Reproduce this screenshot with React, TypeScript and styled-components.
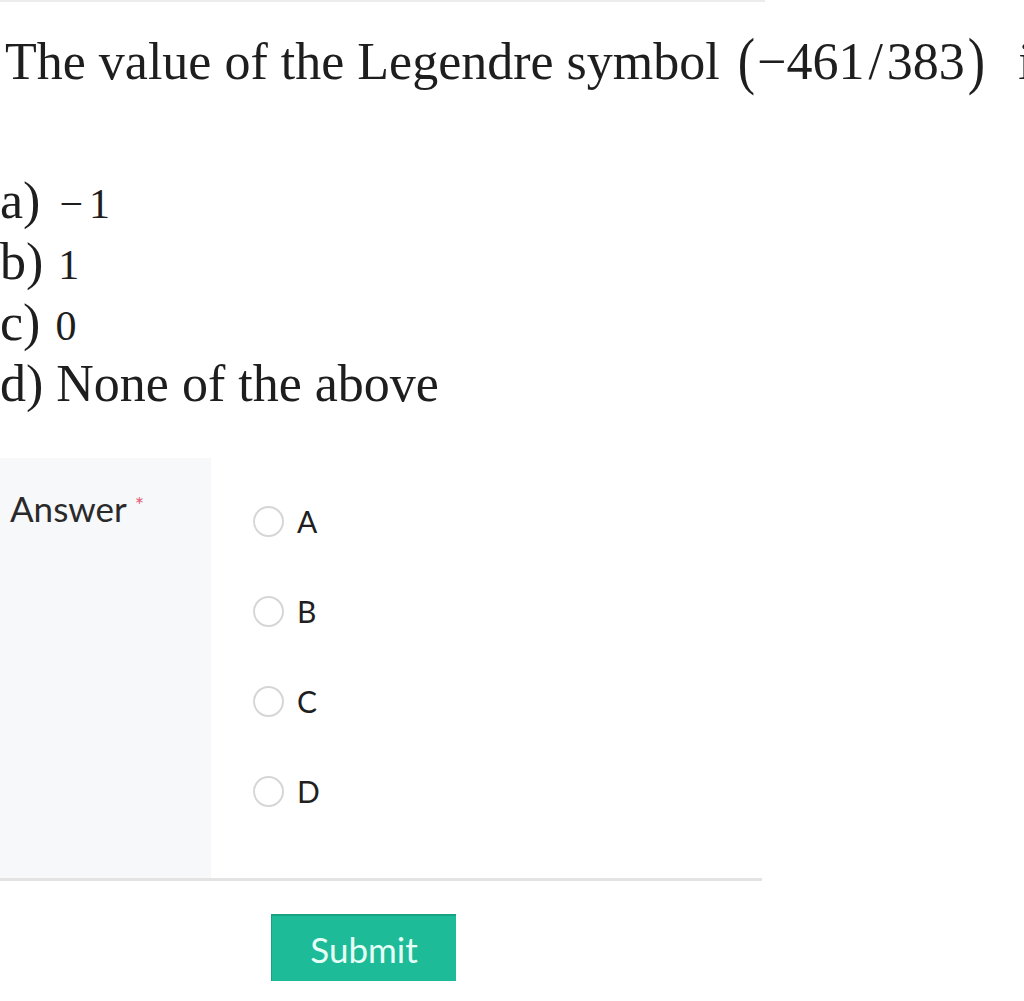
import styled, { createGlobalStyle } from 'styled-components';

const GlobalStyle = createGlobalStyle`
  html, body {
    margin: 0;
    padding: 0;
    background: #fff;
    overflow: hidden;
  }
`

const choices = ['A', 'B', 'C', 'D'];

export default function App() {
    return (
        <Page>
            <GlobalStyle/>
            <TopRule/>
            <Question>
                The value of the Legendre symbol
                <Paren side="left">(</Paren>
                <span>−461</span>
                <Slash>/</Slash>
                <span>383</span>
                <Paren side="right">)</Paren> is
            </Question>
            <Options>
                <Option>a) <Digits>
                    <Minus>−</Minus>1</Digits></Option>
                <Option>b) <Digits>1</Digits></Option>
                <Option>c) <Digits>0</Digits></Option>
                <Option>d) None of the above</Option>
            </Options>
            <AnswerRow>
                <LabelCell>
                    Answer<Required>*</Required>
                </LabelCell>
                <Choices>
                    {choices.map((c) => (
                        <Choice key={c}>
                            <Radio/>
                            <ChoiceText>{c}</ChoiceText>
                        </Choice>
                    ))}
                </Choices>
            </AnswerRow>
            <SubmitButton>Submit</SubmitButton>
        </Page>
    );
}

const Page = styled.div`
    width: 1024px;
    height: 1001px;
    overflow: hidden;
    background: #fff;
`

const TopRule = styled.div`
    width: 765px;
    height: 2px;
    background: #ececec;
`

const Question = styled.div`
    font-family: "Liberation Serif", serif;
    font-size: 52px;
    color: #1e1e1e;
    white-space: nowrap;
    padding-left: 5px;
    margin-top: 28px;
    line-height: 64px;
`

const Paren = styled.span<{ side: 'left' | 'right' }>`
    display: inline-block;
    transform: scaleY(1.2);
    margin: ${({side}) => side === 'left' ? '0 2px 0 18px' : '0 20px 0 3px'};
`

const Slash = styled.span`
    margin: 0 4px;
`

const Options = styled.div`
    margin-top: 76px;
    font-family: "Liberation Serif", serif;
    font-size: 52px;
    color: #1e1e1e;
`

const Option = styled.div`
    line-height: 61px;
    white-space: nowrap;
`

const Digits = styled.span`
    font-size: 42px;
    line-height: 1;
    margin-left: 2px;
`

const Minus = styled.span`
    margin: 0 6px 0 4px;
`

const AnswerRow = styled.div`
    margin-top: 44px;
    width: 762px;
    display: grid;
    grid-template-columns: 211px 1fr;
    border-bottom: 3px solid #e3e3e3;
    height: 420px;
`

const LabelCell = styled.div`
    background: #f7f8fa;
    font-family: Lato, "Liberation Sans", sans-serif;
    font-size: 35px;
    color: #2a2a2a;
    padding: 29px 0 0 10px;
`

const Required = styled.span`
    color: #e0607a;
    font-size: 22px;
    vertical-align: top;
    margin-left: 8px;
    position: relative;
    top: 4px;
`

const Choices = styled.div`
    display: flex;
    flex-direction: column;
    gap: 58px;
    padding: 47px 0 0 42px;
`

const Choice = styled.div`
    display: flex;
    align-items: center;
    gap: 13px;
    height: 32px;
`

const Radio = styled.span`
    width: 27px;
    height: 27px;
    border-radius: 50%;
    border: 2px solid #d6d6d6;
    background: #fff;
`

const ChoiceText = styled.span`
    font-family: Lato, "Liberation Sans", sans-serif;
    font-size: 30px;
    color: #1f1f1f;
`

const SubmitButton = styled.button`
    display: block;
    margin: 33px 0 0 271px;
    width: 185px;
    height: 67px;
    background: #1dbb98;
    border: none;
    border-top: 2px solid #17a284;
    border-left: 1px solid #17a284;
    border-radius: 0;
    font-family: Lato, "Liberation Sans", sans-serif;
    font-size: 35px;
    color: #e6fff7;
    padding: 0;
`
